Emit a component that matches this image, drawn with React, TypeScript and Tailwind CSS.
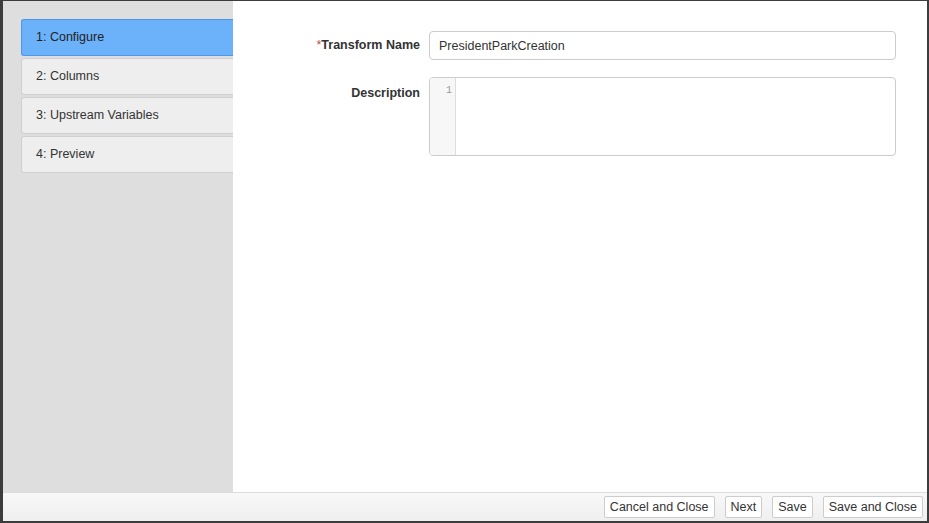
import { useState } from 'react'

const STEPS = ['1: Configure', '2: Columns', '3: Upstream Variables', '4: Preview']

export default function App() {
  const [active, setActive] = useState(0)
  const [name, setName] = useState('PresidentParkCreation')

  return (
    <div className="w-[929px] h-[523px] bg-[#3c3c3c] pl-[3px] pt-px pr-[2px] pb-[2px] [font-family:'Liberation_Sans',Arial,sans-serif] text-[12.5px] text-[#333]">
      <div className="flex flex-col h-full bg-white">
        <div className="flex flex-1 min-h-0">
          {/* Step list */}
          <div className="w-[230px] bg-[#dedede] pl-[18px] pt-[18px] flex flex-col gap-[2px]">
            {STEPS.map((s, i) => (
              <button
                key={s}
                onClick={() => setActive(i)}
                className={
                  i === active
                    ? 'h-[37px] text-left pl-[14px] bg-[#6cb2fa] border border-[#4d95ea] border-r-0 rounded-l-[3px] text-[#222]'
                    : 'h-[37px] text-left pl-[14px] bg-[#eeeeee] border border-[#d0d0d0] border-r-0 rounded-l-[3px] text-[#333]'
                }
              >
                {s}
              </button>
            ))}
          </div>

          {/* Form */}
          <div className="flex-1 pt-[30px] pr-[31px]">
            <div className="flex items-center">
              <label className="w-[196px] text-right pr-[9px] font-bold text-[#333]">
                <span className="text-[#b94a48] font-normal">*</span>Transform Name
              </label>
              <input
                value={name}
                onChange={e => setName(e.target.value)}
                className="flex-1 h-[29px] border border-[#ccc] rounded-[4px] px-[9px] text-[12.5px] text-[#333] outline-none"
              />
            </div>
            <div className="flex items-start mt-[17px]">
              <label className="w-[196px] text-right pr-[9px] pt-[7px] font-bold text-[#333]">Description</label>
              <div className="flex-1 h-[79px] border border-[#ccc] rounded-[4px] flex overflow-hidden">
                <div className="w-[26px] bg-[#f7f7f7] border-r border-[#ddd] text-right pr-[3px] pt-[5px] [font-family:'Liberation_Mono',monospace] text-[10px] text-[#999]">
                  1
                </div>
                <textarea className="flex-1 resize-none outline-none px-[4px] pt-[3px] [font-family:'Liberation_Mono',monospace] text-[12px]" />
              </div>
            </div>
          </div>
        </div>

        {/* Footer */}
        <div className="h-[29px] border-t border-[#dcdcdc] bg-gradient-to-b from-[#f8f8f8] to-[#efefef] flex items-center justify-end gap-[10px] pr-[4px]">
          <button className="h-[22px] px-[5px] bg-white border border-[#ccc] rounded-[2px] text-[#333]">Cancel and Close</button>
          <button className="h-[22px] px-[5px] bg-white border border-[#ccc] rounded-[2px] text-[#333]">Next</button>
          <button className="h-[22px] px-[5px] bg-white border border-[#ccc] rounded-[2px] text-[#333]">Save</button>
          <button className="h-[22px] px-[5px] bg-white border border-[#ccc] rounded-[2px] text-[#333]">Save and Close</button>
        </div>
      </div>
    </div>
  )
}
